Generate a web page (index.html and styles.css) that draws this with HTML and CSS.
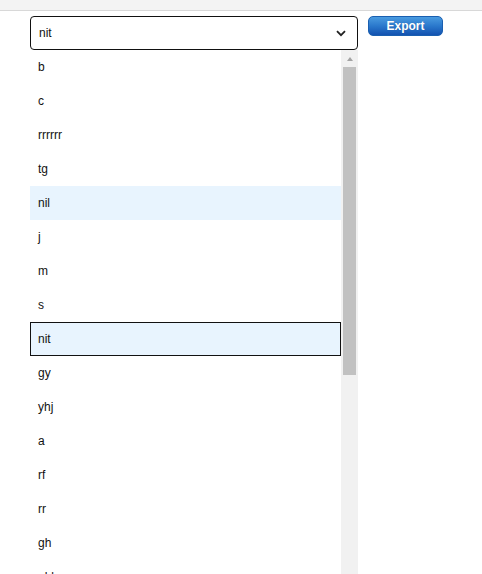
FILE: index.html
```html
<!DOCTYPE html>
<html>
<head>
<meta charset="utf-8">
<link rel="stylesheet" href="styles.css">
</head>
<body>
<div class="topbar"></div>
<div class="main">
  <div class="combo">
    <div class="select">
      <span class="value">nit</span>
      <svg class="chev" width="10" height="7" viewBox="0 0 10 7"><path d="M1 1.2 L5 5.2 L9 1.2" fill="none" stroke="#222" stroke-width="1.8"/></svg>
    </div>
    <div class="dropdown">
      <ul class="list">
        <li class="item">b</li>
        <li class="item">c</li>
        <li class="item">rrrrrr</li>
        <li class="item">tg</li>
        <li class="item hover">nil</li>
        <li class="item">j</li>
        <li class="item">m</li>
        <li class="item">s</li>
        <li class="item selected">nit</li>
        <li class="item">gy</li>
        <li class="item">yhj</li>
        <li class="item">a</li>
        <li class="item">rf</li>
        <li class="item">rr</li>
        <li class="item">gh</li>
        <li class="item">ahl</li>
        <li class="item">x</li>
      </ul>
      <div class="scrollbar">
        <div class="arrow-up"></div>
        <div class="thumb"></div>
      </div>
    </div>
  </div>
  <button class="export">Export</button>
</div>
</body>
</html>
```
FILE: styles.css
```css
html, body {
  margin: 0;
  padding: 0;
  height: 574px;
  overflow: hidden;
  background: #fff;
  font-family: "Liberation Sans", Arial, sans-serif;
  font-size: 12px;
  color: #111;
}
.topbar {
  height: 10px;
  background: #f3f3f3;
  border-bottom: 1px solid #d8d8d8;
}
.main {
  display: flex;
  align-items: flex-start;
  gap: 10px;
  padding: 5px 0 0 30px;
}
.combo {
  width: 328px;
  display: flex;
  flex-direction: column;
}
.select {
  box-sizing: border-box;
  height: 34px;
  border: 1px solid #111;
  border-radius: 4px;
  display: flex;
  align-items: center;
  justify-content: space-between;
  padding: 0 11px 0 8px;
}
.value {
  line-height: 1;
}
.chev {
  display: block;
}
.dropdown {
  display: flex;
  height: 560px;
}
.list {
  list-style: none;
  margin: 0;
  padding: 0;
  width: 311px;
  flex: none;
}
.item {
  box-sizing: border-box;
  height: 34px;
  line-height: 34px;
  padding-left: 8px;
}
.item.hover {
  background: #e8f4fe;
}
.item.selected {
  background: #e8f4fe;
  border: 1px solid #111;
  line-height: 32px;
  padding-left: 7px;
}
.scrollbar {
  width: 17px;
  flex: none;
  background: #f1f1f1;
  display: flex;
  flex-direction: column;
  align-items: center;
}
.arrow-up {
  margin-top: 7px;
  width: 0;
  height: 0;
  border-left: 3.5px solid transparent;
  border-right: 3.5px solid transparent;
  border-bottom: 4px solid #a3a3a3;
}
.thumb {
  margin-top: 6px;
  width: 13px;
  height: 308px;
  background: #c1c1c1;
}
.export {
  box-sizing: border-box;
  width: 75px;
  height: 20px;
  margin-top: 0;
  padding: 0;
  border: 1px solid #1a5fb0;
  border-radius: 5px;
  background: linear-gradient(#4a9be0, #2a78cc 50%, #1352b0);
  color: #fff;
  font-family: "Liberation Sans", Arial, sans-serif;
  font-weight: bold;
  font-size: 12px;
  line-height: 18px;
  text-shadow: 0 0 1px rgba(0,0,0,0.2);
}
```
